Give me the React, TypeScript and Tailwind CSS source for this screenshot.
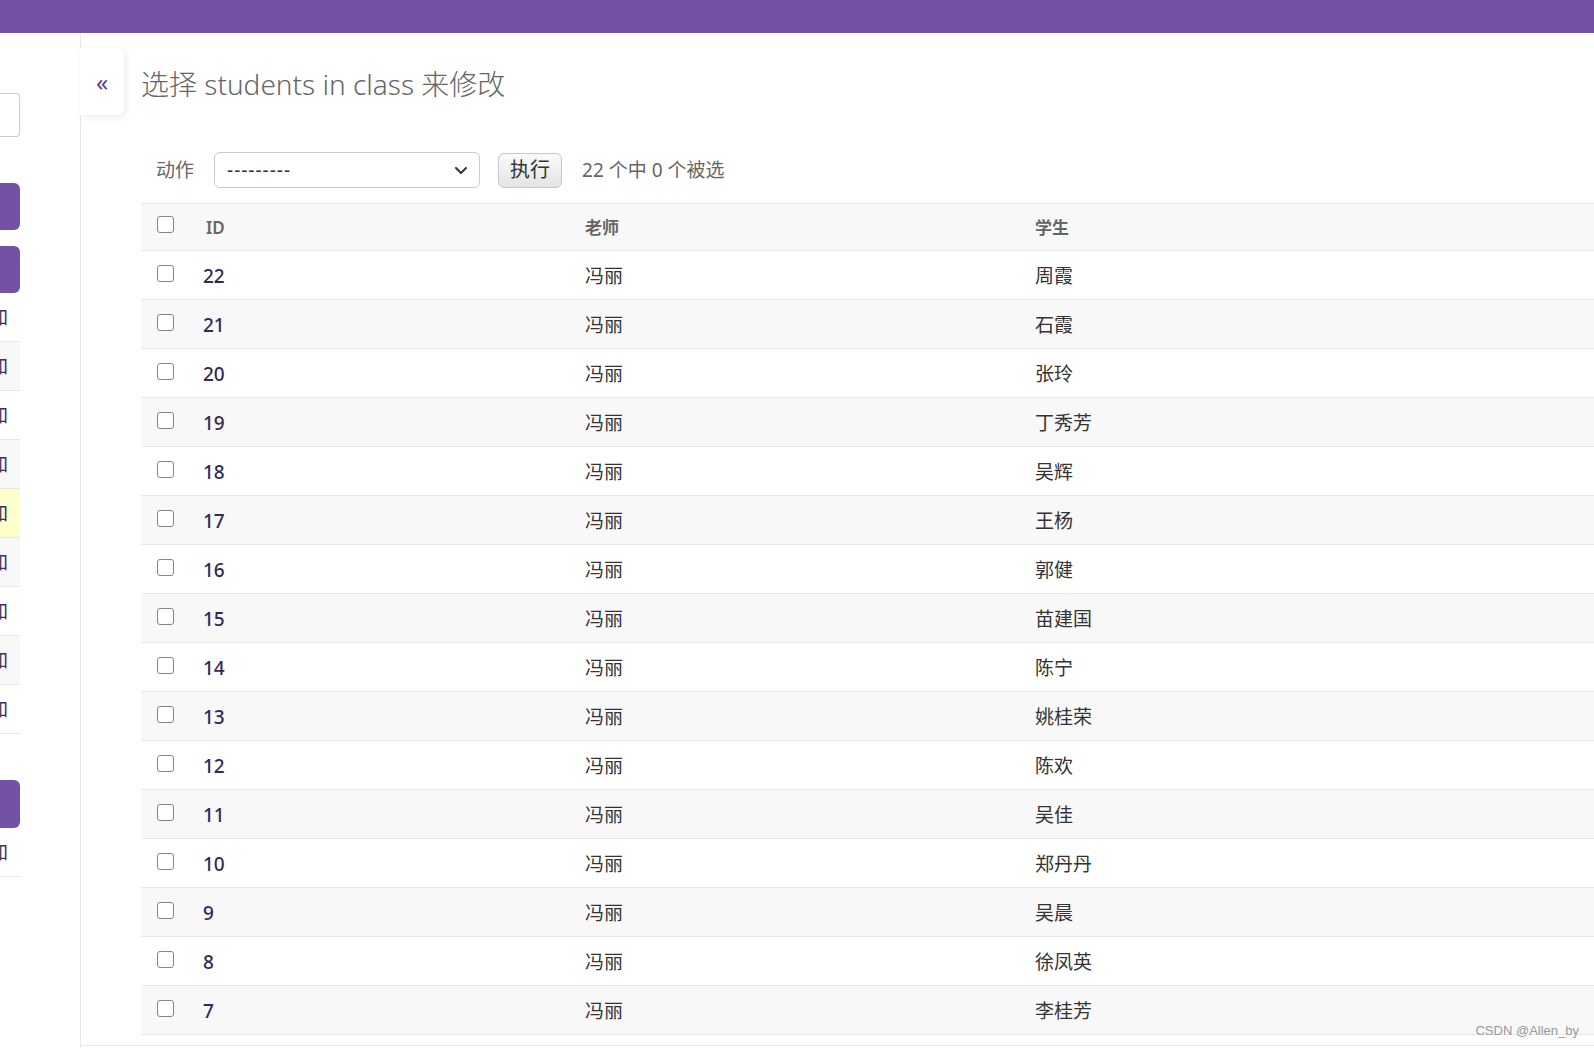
const students = [
  { id: 22, name: "周霞" },
  { id: 21, name: "石霞" },
  { id: 20, name: "张玲" },
  { id: 19, name: "丁秀芳" },
  { id: 18, name: "吴辉" },
  { id: 17, name: "王杨" },
  { id: 16, name: "郭健" },
  { id: 15, name: "苗建国" },
  { id: 14, name: "陈宁" },
  { id: 13, name: "姚桂荣" },
  { id: 12, name: "陈欢" },
  { id: 11, name: "吴佳" },
  { id: 10, name: "郑丹丹" },
  { id: 9, name: "吴晨" },
  { id: 8, name: "徐凤英" },
  { id: 7, name: "李桂芳" },
];

const Checkbox = () => (
  <span className="block w-[17px] h-[17px] rounded-[3px] border-[1.5px] border-[#858585] bg-white" />
);

const NavRow = ({ tint }: { tint?: string }) => (
  <div
    className={`h-[49px] w-[20px] overflow-hidden border-b border-[#e8e8e8] flex items-center justify-end pr-[12px] ${
      tint ?? "bg-white"
    }`}
  >
    <span className="shrink-0 whitespace-nowrap text-[19px] text-[#3a2f63]">增加</span>
  </div>
);

const Sidebar = () => (
  <aside className="w-[81px] shrink-0 border-r border-[#e8e8e8]">
    <div className="w-[20px] pt-[60px]">
      {/* search box, mostly scrolled out of view */}
      <div className="h-[44px] border border-l-0 border-[#cccccc] rounded-r-[4px]" />
      <div className="mt-[46px] h-[47px] bg-[#7352a5] rounded-r-[6px]" />
      <div className="mt-[16px] h-[47px] bg-[#7352a5] rounded-r-[6px]" />
      <NavRow />
      <NavRow tint="bg-[#f8f8f8]" />
      <NavRow />
      <NavRow tint="bg-[#f8f8f8]" />
      <NavRow tint="bg-[#ffffcc]" />
      <NavRow tint="bg-[#f8f8f8]" />
      <NavRow />
      <NavRow tint="bg-[#f8f8f8]" />
      <NavRow />
      <div className="mt-[46px] h-[48px] bg-[#7352a5] rounded-r-[6px]" />
      <NavRow />
    </div>
  </aside>
);

const cols = "grid grid-cols-[51px_381px_450px_1fr]";

const App = () => {
  return (
    <div className="relative w-[1594px] h-[1048px] overflow-hidden bg-white text-[#333] [font-family:'Noto_Sans','Noto_Sans_CJK_SC',sans-serif]">
      <header className="h-[33px] bg-[#7352a5]" />

      <div className="flex h-[1015px]">
        <Sidebar />

        <main className="flex-1 flex flex-col">
          <div className="flex-1 pl-[60px]">
            <h1 className="mt-[33px] h-[36px] leading-[36px] text-[28px] font-light text-[#666]">
              选择 students in class 来修改
            </h1>

            {/* actions */}
            <div className="mt-[50px] flex items-center h-[36px] pl-[15px]">
              <span className="text-[19px] text-[#666]">动作</span>
              <div className="ml-[20px] w-[266px] h-[36px] border border-[#cccccc] rounded-[6px] flex items-center justify-between pl-[12px] pr-[10px]">
                <span className="text-[19px] tracking-[1px] text-[#333]">---------</span>
                <svg width="16" height="16" viewBox="0 0 16 16" fill="none">
                  <path d="M3 6l5 5 5-5" stroke="#333" strokeWidth="2" strokeLinecap="round" strokeLinejoin="round" />
                </svg>
              </div>
              <button className="ml-[18px] w-[64px] h-[35px] rounded-[6px] border border-[#c8c8c8] bg-gradient-to-b from-[#fafafa] to-[#e4e4e4] text-[20px] text-[#333]">
                执行
              </button>
              <span className="ml-[20px] text-[19px] text-[#666]">22 个中 0 个被选</span>
            </div>

            {/* results table */}
            <div className="mt-[15px]">
              <div className={`${cols} h-[48px] bg-[#f8f8f8] border-y border-[#e8e8e8] text-[17px] font-semibold text-[#666]`}>
                <div className="pl-[16px] pt-[12px]">
                  <Checkbox />
                </div>
                <div className="pl-[14px] pt-[12px] leading-[24px]">ID</div>
                <div className="pl-[12px] pt-[12px] leading-[24px]">老师</div>
                <div className="pl-[12px] pt-[12px] leading-[24px]">学生</div>
              </div>

              {students.map((s, i) => (
                <div
                  key={s.id}
                  className={`${cols} h-[49px] border-b border-[#e8e8e8] ${i % 2 === 1 ? "bg-[#f8f8f8]" : "bg-white"}`}
                >
                  <div className="pl-[16px] pt-[14px]">
                    <Checkbox />
                  </div>
                  <div className="pl-[11px] pt-[13px] leading-[24px] text-[19px] font-medium text-[#32285a]">
                    {s.id}
                  </div>
                  <div className="pl-[12px] pt-[13px] leading-[24px] text-[19px] text-[#333]">冯丽</div>
                  <div className="pl-[12px] pt-[13px] leading-[24px] text-[19px] text-[#333]">{s.name}</div>
                </div>
              ))}
            </div>
          </div>

          <div className="h-[3px] border-t border-[#e8e8e8]" />
        </main>
      </div>

      {/* sidebar toggle */}
      <button className="absolute left-[80px] top-[48px] w-[44px] h-[67px] bg-white rounded-r-[6px] shadow-[2px_2px_8px_rgba(0,0,0,0.08)] flex items-center justify-center text-[24px] leading-none text-[#5b4494]">
        «
      </button>

      <span className="absolute right-[15px] top-[1021px] text-[13px] text-[#999] [font-family:'Liberation_Sans',Arial,sans-serif]">
        CSDN @Allen_by
      </span>
    </div>
  );
};

export default App;
